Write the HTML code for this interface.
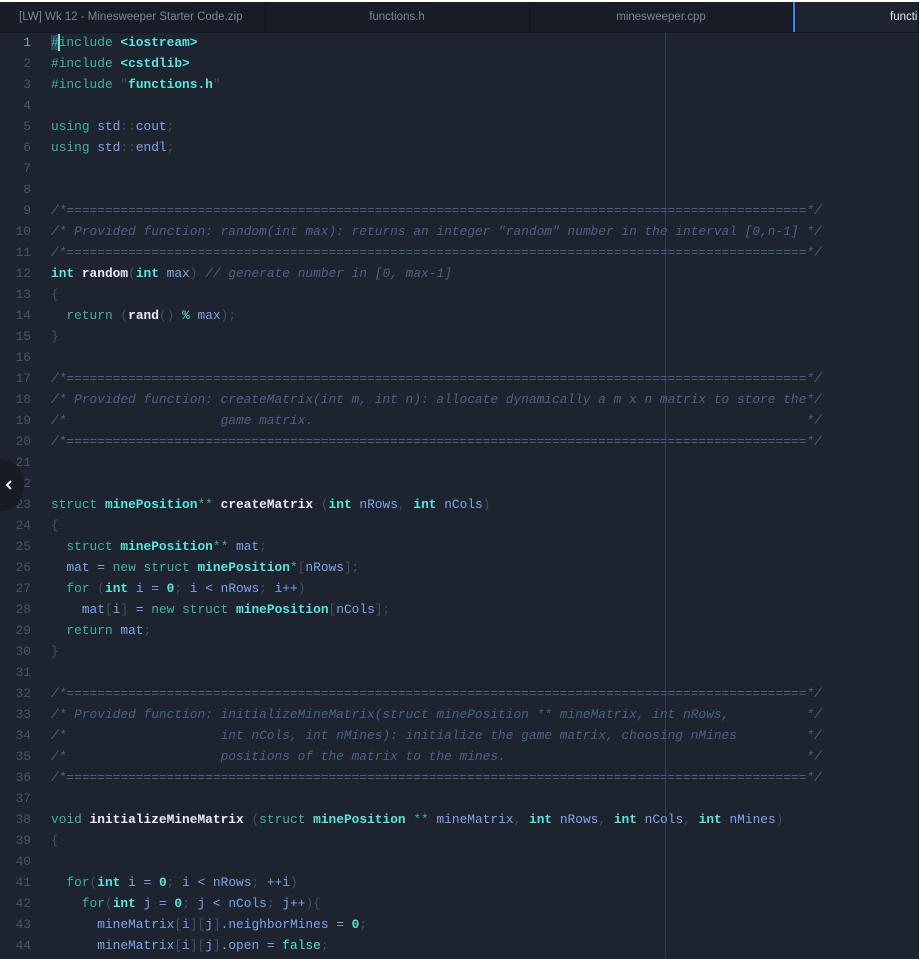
<!DOCTYPE html>
<html><head><meta charset="utf-8"><style>
html,body{margin:0;padding:0;background:#1e2330;width:919px;height:959px;overflow:hidden;font-family:"Liberation Sans",sans-serif}
#top{position:absolute;left:0;top:0;width:919px;height:2px;background:#fff}
#tabs{position:absolute;left:0;top:2px;width:919px;height:30px;background:#181c26;border-bottom:1px solid #151821}
.tab{position:absolute;top:0;height:30px;line-height:30px;font-size:11.5px;color:#7d8494;text-align:center;border-right:1px solid #12151c;box-sizing:border-box;white-space:nowrap;overflow:hidden}
#code{position:absolute;left:0;top:32px;width:919px}
.l{position:relative;height:21px;line-height:21px;font-family:"Liberation Mono",monospace;font-size:12.85px;white-space:pre;color:#7ea4e6}
.n{position:absolute;left:0;width:31px;text-align:right;color:#4a5366}
.x{position:absolute;left:51px}
.k{color:#3db3a6}.t{color:#57e6dd;font-weight:bold}.v{color:#7ea4e6}.f{color:#e6ebf2;font-weight:bold}.p{color:#454e62}.c{color:#4b6184;font-style:italic}
#guide{position:absolute;left:665px;top:32px;width:1px;height:927px;background:#333b4c}
#btn{position:absolute;left:-22px;top:459px;width:46px;height:52px;border-radius:50%;background:#171b24}
</style></head><body>
<div id="top"></div>
<div id="tabs">
<div class="tab" style="left:0;width:265px;text-align:left;padding-left:19px">[LW] Wk 12 - Minesweeper Starter Code.zip</div>
<div class="tab" style="left:265px;width:265px">functions.h</div>
<div class="tab" style="left:530px;width:263px">minesweeper.cpp</div>
<div class="tab" style="left:793px;width:126px;background:#1e2330;border-left:2px solid #3f86e6;color:#e6e9ee;text-align:left;padding-left:95px">functions.cpp</div>
</div>
<div id="guide"></div>
<div id="code">
<div class="l"><span class="n" style="color:#8a93a6">1</span><span class="x"><span class="k" style="background:#3a4356">#</span><span style="display:inline-block;width:2px;height:17px;background:#5ee8e0;vertical-align:middle;margin-left:-1px;margin-right:-1px"></span><span class="k">include</span> <span class="t">&lt;iostream&gt;</span></span></div>
<div class="l"><span class="n">2</span><span class="x"><span class="k">#include</span> <span class="t">&lt;cstdlib&gt;</span></span></div>
<div class="l"><span class="n">3</span><span class="x"><span class="k">#include</span> <span class="p">"</span><span class="t">functions.h</span><span class="p">"</span></span></div>
<div class="l"><span class="n">4</span></div>
<div class="l"><span class="n">5</span><span class="x"><span class="k">using</span> std<span class="p">::</span>cout<span class="p">;</span></span></div>
<div class="l"><span class="n">6</span><span class="x"><span class="k">using</span> std<span class="p">::</span>endl<span class="p">;</span></span></div>
<div class="l"><span class="n">7</span></div>
<div class="l"><span class="n">8</span></div>
<div class="l"><span class="n">9</span><span class="x c">/*================================================================================================*/</span></div>
<div class="l"><span class="n">10</span><span class="x c">/* Provided function: random(int max): returns an integer "random" number in the interval [0,n-1] */</span></div>
<div class="l"><span class="n">11</span><span class="x c">/*================================================================================================*/</span></div>
<div class="l"><span class="n">12</span><span class="x"><span class="t">int</span> <span class="f">random</span><span class="p">(</span><span class="t">int</span> max<span class="p">)</span> <span class="c">// generate number in [0, max-1]</span></span></div>
<div class="l"><span class="n">13</span><span class="x p">{</span></div>
<div class="l"><span class="n">14</span><span class="x">  <span class="k">return</span> <span class="p">(</span><span class="f">rand</span><span class="p">()</span> <span class="t" style="font-weight:normal">%</span> max<span class="p">);</span></span></div>
<div class="l"><span class="n">15</span><span class="x p">}</span></div>
<div class="l"><span class="n">16</span></div>
<div class="l"><span class="n">17</span><span class="x c">/*================================================================================================*/</span></div>
<div class="l"><span class="n">18</span><span class="x c">/* Provided function: createMatrix(int m, int n): allocate dynamically a m x n matrix to store the*/</span></div>
<div class="l"><span class="n">19</span><span class="x c">/*                    game matrix.                                                                */</span></div>
<div class="l"><span class="n">20</span><span class="x c">/*================================================================================================*/</span></div>
<div class="l"><span class="n">21</span></div>
<div class="l"><span class="n">22</span></div>
<div class="l"><span class="n">23</span><span class="x"><span class="k">struct</span> <span class="t">minePosition</span><span class="k">**</span> <span class="f">createMatrix</span> <span class="p">(</span><span class="t">int</span> nRows<span class="p">,</span> <span class="t">int</span> nCols<span class="p">)</span></span></div>
<div class="l"><span class="n">24</span><span class="x p">{</span></div>
<div class="l"><span class="n">25</span><span class="x">  <span class="k">struct</span> <span class="t">minePosition</span><span class="k">**</span> mat<span class="p">;</span></span></div>
<div class="l"><span class="n">26</span><span class="x">  mat = <span class="k">new struct</span> <span class="t">minePosition</span><span class="k">*</span><span class="p">[</span>nRows<span class="p">];</span></span></div>
<div class="l"><span class="n">27</span><span class="x">  <span class="k">for</span> <span class="p">(</span><span class="t">int</span> i = <span class="t">0</span><span class="p">;</span> i &lt; nRows<span class="p">;</span> i++<span class="p">)</span></span></div>
<div class="l"><span class="n">28</span><span class="x">    mat<span class="p">[</span>i<span class="p">]</span> = <span class="k">new struct</span> <span class="t">minePosition</span><span class="p">[</span>nCols<span class="p">];</span></span></div>
<div class="l"><span class="n">29</span><span class="x">  <span class="k">return</span> mat<span class="p">;</span></span></div>
<div class="l"><span class="n">30</span><span class="x p">}</span></div>
<div class="l"><span class="n">31</span></div>
<div class="l"><span class="n">32</span><span class="x c">/*================================================================================================*/</span></div>
<div class="l"><span class="n">33</span><span class="x c">/* Provided function: initializeMineMatrix(struct minePosition ** mineMatrix, int nRows,          */</span></div>
<div class="l"><span class="n">34</span><span class="x c">/*                    int nCols, int nMines): initialize the game matrix, choosing nMines         */</span></div>
<div class="l"><span class="n">35</span><span class="x c">/*                    positions of the matrix to the mines.                                       */</span></div>
<div class="l"><span class="n">36</span><span class="x c">/*================================================================================================*/</span></div>
<div class="l"><span class="n">37</span></div>
<div class="l"><span class="n">38</span><span class="x"><span class="k">void</span> <span class="f">initializeMineMatrix</span> <span class="p">(</span><span class="k">struct</span> <span class="t">minePosition</span> <span class="k">**</span> mineMatrix<span class="p">,</span> <span class="t">int</span> nRows<span class="p">,</span> <span class="t">int</span> nCols<span class="p">,</span> <span class="t">int</span> nMines<span class="p">)</span></span></div>
<div class="l"><span class="n">39</span><span class="x p">{</span></div>
<div class="l"><span class="n">40</span></div>
<div class="l"><span class="n">41</span><span class="x">  <span class="k">for</span><span class="p">(</span><span class="t">int</span> i = <span class="t">0</span><span class="p">;</span> i &lt; nRows<span class="p">;</span> ++i<span class="p">)</span></span></div>
<div class="l"><span class="n">42</span><span class="x">    <span class="k">for</span><span class="p">(</span><span class="t">int</span> j = <span class="t">0</span><span class="p">;</span> j &lt; nCols<span class="p">;</span> j++<span class="p">){</span></span></div>
<div class="l"><span class="n">43</span><span class="x">      mineMatrix<span class="p">[</span>i<span class="p">][</span>j<span class="p">]</span>.neighborMines = <span class="t">0</span><span class="p">;</span></span></div>
<div class="l"><span class="n">44</span><span class="x">      mineMatrix<span class="p">[</span>i<span class="p">][</span>j<span class="p">]</span>.open = <span class="t" style="font-weight:normal">false</span><span class="p">;</span></span></div>
</div>
<div id="btn"></div>
<svg style="position:absolute;left:3px;top:479px" width="12" height="12" viewBox="0 0 12 12"><path d="M8 2 L4 6 L8 10" stroke="#e6e9ee" stroke-width="2" fill="none"/></svg>
</body></html>
